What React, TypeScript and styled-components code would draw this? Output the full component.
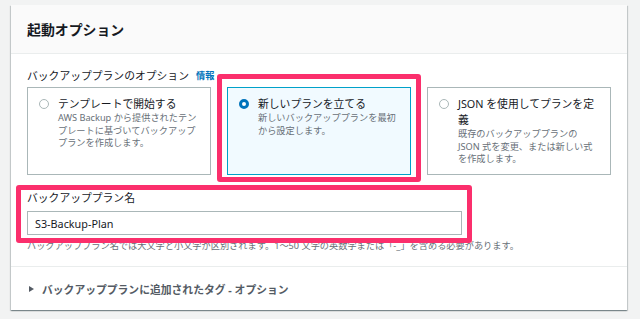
import React from "react";
import styled, { createGlobalStyle } from "styled-components";

const GlobalStyle = createGlobalStyle`
  html, body {
    margin: 0;
    padding: 0;
    background: #f2f3f3;
  }
  body {
    font-family: "Noto Sans", "Noto Sans CJK JP", sans-serif;
    color: #16191f;
  }
`;

const Page = styled.div`
  padding: 5px 0 0 11px;
  min-height: 319px;
  box-sizing: border-box;
`;

const Panel = styled.section`
  width: 616px;
  background: #fff;
  box-shadow: 0 1px 1px 0 rgba(0, 28, 36, 0.3), 1px 1px 1px 0 rgba(0, 28, 36, 0.15),
    -1px 1px 1px 0 rgba(0, 28, 36, 0.15);
`;

const Header = styled.header`
  height: 48px;
  display: flex;
  align-items: center;
  padding: 0 16px;
  background: #fafafa;
  border-bottom: 1px solid #eaeded;
`;

const Title = styled.h2`
  margin: 0;
  font-size: 13.9px;
  font-weight: 700;
  color: #16191f;
`;

const Body = styled.div`
  padding: 15px 16px 14px;
`;

const Label = styled.div`
  font-size: 10.8px;
  line-height: 14px;
  color: #16191f;
  display: flex;
  align-items: center;
`;

const InfoLink = styled.span`
  margin-left: 7px;
  font-size: 9.2px;
  font-weight: 700;
  color: #0073bb;
`;

const Tiles = styled.div`
  margin-top: 4px;
  display: grid;
  grid-template-columns: repeat(3, 1fr);
  column-gap: 16px;
`;

const TileWrap = styled.div`
  position: relative;
  display: flex;
`;

const Tile = styled.div<{ $selected?: boolean }>`
  flex: 1;
  height: 88px;
  box-sizing: border-box;
  display: flex;
  align-items: flex-start;
  gap: 9px;
  padding: 8px 13px 0 11px;
  border: 1px solid ${(p) => (p.$selected ? "#00a1c9" : "#aab7b8")};
  background: ${(p) => (p.$selected ? "#f1faff" : "#fff")};
`;

const Radio = styled.span<{ $checked?: boolean }>`
  flex: none;
  width: 10px;
  height: 10px;
  margin-top: 3px;
  box-sizing: border-box;
  border-radius: 50%;
  background: #fff;
  border: ${(p) => (p.$checked ? "3px solid #0073bb" : "1px solid #aab7b8")};
`;

const TileText = styled.div`
  flex: 1;
  min-width: 0;
`;

const TileTitle = styled.div`
  font-size: 10.8px;
  line-height: 16px;
  color: #16191f;
`;

const TileDesc = styled.div`
  font-size: 9.2px;
  line-height: 12.5px;
  color: #687078;
`;

const Highlight = styled.div<{ $t: number; $r: number; $b: number; $l: number }>`
  position: absolute;
  top: ${(p) => p.$t}px;
  right: ${(p) => p.$r}px;
  bottom: ${(p) => p.$b}px;
  left: ${(p) => p.$l}px;
  border: 5px solid #fb2f6c;
  border-radius: 3px;
  pointer-events: none;
  z-index: 2;
`;

const Field = styled.div`
  position: relative;
  width: 435px;
  margin-top: 16px;
`;

const FieldLabel = styled(Label)`
  margin-bottom: 6px;
`;

const Input = styled.input`
  display: block;
  width: 100%;
  height: 24px;
  box-sizing: border-box;
  padding: 0 7px;
  border: 1px solid #aab7b8;
  border-radius: 0;
  font-family: "Noto Sans", "Noto Sans CJK JP", sans-serif;
  font-size: 10.8px;
  color: #16191f;
  background: #fff;
  outline: none;
`;

const Hint = styled.div`
  margin-top: 5px;
  font-size: 9.2px;
  line-height: 12px;
  color: #687078;
  white-space: nowrap;
`;

const Expander = styled.div`
  height: 43px;
  border-top: 1px solid #eaeded;
  display: flex;
  align-items: center;
  padding: 0 18px;
  gap: 8px;
`;

const Caret = styled.span`
  width: 0;
  height: 0;
  border-top: 3.5px solid transparent;
  border-bottom: 3.5px solid transparent;
  border-left: 5px solid #545b64;
`;

const ExpanderText = styled.span`
  font-size: 10.8px;
  font-weight: 700;
  color: #545b64;
`;

type TileData = { title: string; desc: string; selected?: boolean };

const tiles: TileData[] = [
  {
    title: "テンプレートで開始する",
    desc: "AWS Backup から提供されたテンプレートに基づいてバックアッププランを作成します。",
  },
  {
    title: "新しいプランを立てる",
    desc: "新しいバックアッププランを最初から設定します。",
    selected: true,
  },
  {
    title: "JSON を使用してプランを定義",
    desc: "既存のバックアッププランの JSON 式を変更、または新しい式を作成します。",
  },
];

export default function App() {
  return (
    <Page>
      <GlobalStyle />
      <Panel>
        <Header>
          <Title>起動オプション</Title>
        </Header>
        <Body>
          <Label>
            バックアッププランのオプション
            <InfoLink>情報</InfoLink>
          </Label>
          <Tiles>
            {tiles.map((t) => (
              <TileWrap key={t.title}>
                <Tile $selected={t.selected}>
                  <Radio $checked={t.selected} />
                  <TileText>
                    <TileTitle>{t.title}</TileTitle>
                    <TileDesc>{t.desc}</TileDesc>
                  </TileText>
                </Tile>
                {t.selected && <Highlight $t={-13} $r={-10} $b={-7} $l={-10} />}
              </TileWrap>
            ))}
          </Tiles>
          <Field>
            <FieldLabel>バックアッププラン名</FieldLabel>
            <Input defaultValue="S3-Backup-Plan" />
            <Highlight $t={-6} $r={-10} $b={-8} $l={-11} />
          </Field>
          <Hint>
            バックアッププラン名では大文字と小文字が区別されます。1～50 文字の英数字または「-_」を含める必要があります。
          </Hint>
        </Body>
        <Expander>
          <Caret />
          <ExpanderText>バックアッププランに追加されたタグ - オプション</ExpanderText>
        </Expander>
      </Panel>
    </Page>
  );
}
